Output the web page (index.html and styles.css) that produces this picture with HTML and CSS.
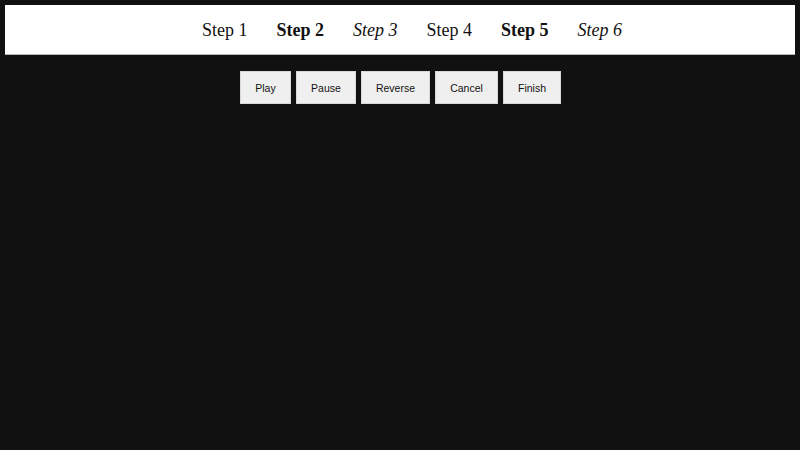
FILE: index.html
```html
<!DOCTYPE html>
<html>
<head>
<meta charset="utf-8">
<link rel="stylesheet" href="styles.css">
</head>
<body>
<nav class="steps">
  <span class="step">Step 1</span>
  <span class="step bold">Step 2</span>
  <span class="step italic">Step 3</span>
  <span class="step">Step 4</span>
  <span class="step bold">Step 5</span>
  <span class="step italic">Step 6</span>
</nav>
<div class="controls">
  <button class="btn">Play</button>
  <button class="btn">Pause</button>
  <button class="btn">Reverse</button>
  <button class="btn">Cancel</button>
  <button class="btn">Finish</button>
</div>
</body>
</html>
```
FILE: styles.css
```css
html, body {
  margin: 0;
  padding: 0;
  background: #111111;
  height: 100%;
}
body {
  padding: 5px;
  box-sizing: border-box;
}
.steps {
  background: #ffffff;
  height: 50px;
  display: flex;
  justify-content: center;
  align-items: center;
  gap: 29px;
  border-bottom: 1px solid #b8b8b8;
  box-sizing: border-box;
  font-family: "Liberation Serif", serif;
  font-size: 18px;
  color: #111;
  padding-left: 24px;
  padding-top: 2px;
}
.bold { font-weight: bold; }
.italic { font-style: italic; }
.controls {
  display: flex;
  justify-content: center;
  gap: 5px;
  margin-top: 16px;
  padding-left: 1px;
}
.btn {
  font-family: "Liberation Sans", Arial, sans-serif;
  font-size: 10.5px;
  color: #111;
  background: #efefef;
  border: 1px solid #d8d8d8;
  height: 33px;
  padding: 0 10px;
  margin: 0;
}
.btn:nth-child(1) { width: 51px; }
.btn:nth-child(2) { width: 60px; }
.btn:nth-child(3) { width: 69px; }
.btn:nth-child(4) { width: 63px; }
.btn:nth-child(5) { width: 58px; }
```
